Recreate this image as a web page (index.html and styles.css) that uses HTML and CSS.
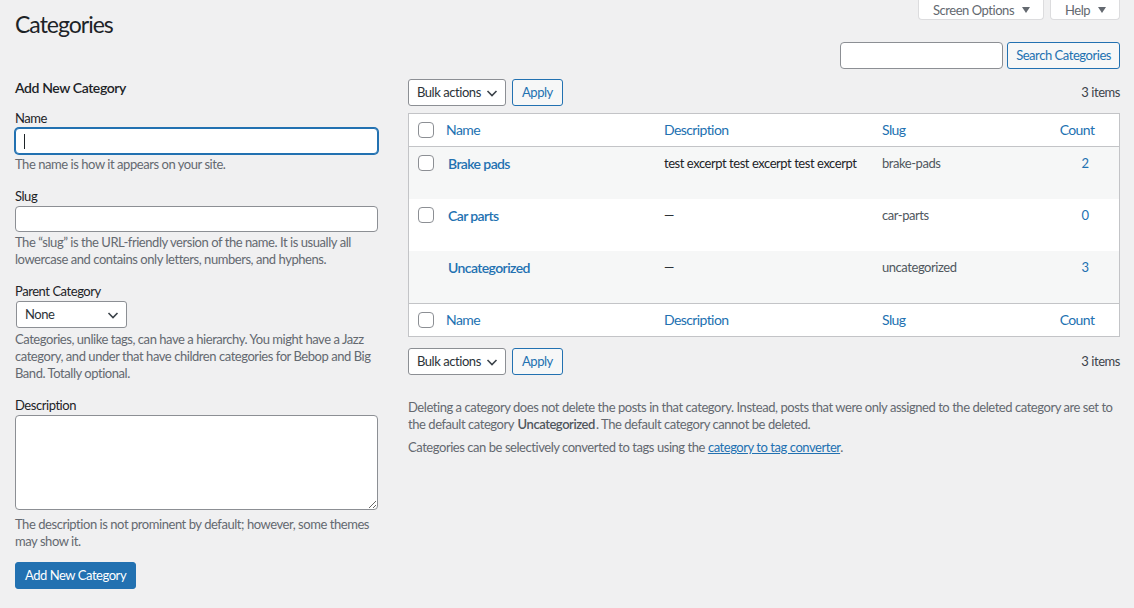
FILE: index.html
```html
<!DOCTYPE html>
<html lang="en">
<head>
    <meta charset="utf-8">
    <title>Categories</title>
    <link rel="stylesheet" href="styles.css">
</head>
<body>
    <div class="wrap">
        <div class="page-head">
            <h1>Categories</h1>
            <div class="screen-meta-links">
                <button class="meta-tab">Screen Options <svg class="tri" width="8" height="6" viewBox="0 0 8 6"><path d="M0 0h8L4 6z"/></svg></button>
                <button class="meta-tab">Help <svg class="tri" width="8" height="6" viewBox="0 0 8 6"><path d="M0 0h8L4 6z"/></svg></button>
            </div>
        </div>

        <form class="search-box">
            <input type="search" class="search-input">
            <button type="button" class="button">Search Categories</button>
        </form>

        <div class="col-container">
            <div class="col-left">
                <h2>Add New Category</h2>
                <form class="form-wrap">
                    <div class="form-field">
                        <label for="tag-name">Name</label>
                        <div class="input-wrap">
                            <input type="text" id="tag-name" class="text-input focused">
                            <span class="caret"></span>
                        </div>
                        <p class="help">The name is how it appears on your site.</p>
                    </div>
                    <div class="form-field">
                        <label for="tag-slug">Slug</label>
                        <input type="text" id="tag-slug" class="text-input">
                        <p class="help">The “slug” is the URL-friendly version of the name. It is usually all lowercase and contains only letters, numbers, and hyphens.</p>
                    </div>
                    <div class="form-field">
                        <label for="parent">Parent Category</label>
                        <select id="parent" class="select parent-select">
                            <option>None</option>
                        </select>
                        <p class="help">Categories, unlike tags, can have a hierarchy. You might have a Jazz category, and under that have children categories for Bebop and Big Band. Totally optional.</p>
                    </div>
                    <div class="form-field">
                        <label for="tag-description">Description</label>
                        <textarea id="tag-description" class="textarea"></textarea>
                        <p class="help">The description is not prominent by default; however, some themes may show it.</p>
                    </div>
                    <button type="button" class="button-primary">Add New Category</button>
                </form>
            </div>

            <div class="col-right">
                <div class="tablenav">
                    <div class="bulk">
                        <select class="select bulk-select"><option>Bulk actions</option></select>
                        <button type="button" class="button">Apply</button>
                    </div>
                    <span class="num-items">3 items</span>
                </div>

                <table class="widefat">
                    <thead>
                        <tr>
                            <th class="check-column"><span class="checkbox"></span></th>
                            <th class="col-name"><a href="#">Name</a></th>
                            <th class="col-desc"><a href="#">Description</a></th>
                            <th class="col-slug"><a href="#">Slug</a></th>
                            <th class="col-count"><a href="#">Count</a></th>
                        </tr>
                    </thead>
                    <tbody>
                        <tr class="alt">
                            <td class="check-column"><span class="checkbox"></span></td>
                            <td class="col-name"><a class="row-title" href="#">Brake pads</a></td>
                            <td class="col-desc desc-text">test excerpt test excerpt test excerpt</td>
                            <td class="col-slug">brake-pads</td>
                            <td class="col-count"><a href="#">2</a></td>
                        </tr>
                        <tr>
                            <td class="check-column"><span class="checkbox"></span></td>
                            <td class="col-name"><a class="row-title" href="#">Car parts</a></td>
                            <td class="col-desc">—</td>
                            <td class="col-slug">car-parts</td>
                            <td class="col-count"><a href="#">0</a></td>
                        </tr>
                        <tr class="alt">
                            <td class="check-column"></td>
                            <td class="col-name"><a class="row-title" href="#">Uncategorized</a></td>
                            <td class="col-desc">—</td>
                            <td class="col-slug">uncategorized</td>
                            <td class="col-count"><a href="#">3</a></td>
                        </tr>
                    </tbody>
                    <tfoot>
                        <tr>
                            <th class="check-column"><span class="checkbox"></span></th>
                            <th class="col-name"><a href="#">Name</a></th>
                            <th class="col-desc"><a href="#">Description</a></th>
                            <th class="col-slug"><a href="#">Slug</a></th>
                            <th class="col-count"><a href="#">Count</a></th>
                        </tr>
                    </tfoot>
                </table>

                <div class="tablenav bottom">
                    <div class="bulk">
                        <select class="select bulk-select"><option>Bulk actions</option></select>
                        <button type="button" class="button">Apply</button>
                    </div>
                    <span class="num-items">3 items</span>
                </div>

                <div class="notes">
                    <p>Deleting a category does not delete the posts in that category. Instead, posts that were only assigned to the deleted category are set to the default category <strong>Uncategorized</strong>. The default category cannot be deleted.</p>
                    <p>Categories can be selectively converted to tags using the <a href="#">category to tag converter</a>.</p>
                </div>
            </div>
        </div>
    </div>
</body>
</html>
```

FILE: styles.css
```css
body {
    margin: 0;
    background-color: #f0f0f1;
    color: #3c434a;
    font-family: Lato, "Segoe UI", sans-serif;
    font-size: 13px;
    line-height: 17px;
    letter-spacing: -0.45px;
}

a {
    color: #2271b1;
    text-decoration: none;
}

input,
select,
textarea,
button {
    letter-spacing: inherit;
}

.wrap {
    padding: 0 14px 0 15px;
}

.page-head {
    display: flex;
    justify-content: space-between;
    align-items: flex-start;
}

h1 {
    margin: 9px 0 0;
    font-size: 23px;
    font-weight: 400;
    line-height: 30px;
    letter-spacing: -1px;
    color: #1d2327;
}

.screen-meta-links {
    display: flex;
    gap: 6px;
}

.meta-tab {
    height: 20px;
    padding: 0 13px 0 14px;
    border: 1px solid #dcdcde;
    border-top: 0;
    border-radius: 0 0 4px 4px;
    background-color: #fff;
    color: #646970;
    font: inherit;
    line-height: 18px;
}

.meta-tab .tri {
    margin-left: 5px;
    fill: #646970;
    vertical-align: 2px;
}

.search-box {
    display: flex;
    justify-content: flex-end;
    gap: 4px;
    margin-top: 3px;
}

.search-input {
    width: 163px;
    height: 27px;
    box-sizing: border-box;
    border: 1px solid #8c8f94;
    border-radius: 4px;
    background-color: #fff;
}

.button {
    height: 27px;
    padding: 0 9px;
    border: 1px solid #2271b1;
    border-radius: 3px;
    background-color: #f6f7f7;
    color: #2271b1;
    font: inherit;
}

.search-box .button {
    padding: 0 8px;
}

.col-container {
    display: flex;
}

.col-left {
    width: 363px;
    margin-right: 30px;
    flex-shrink: 0;
}

.col-right {
    flex: 1;
}

h2 {
    margin: 9px 0 12px;
    font-size: 14px;
    font-weight: 600;
    line-height: 20px;
    letter-spacing: -0.4px;
    color: #1d2327;
}

.form-field {
    margin-bottom: 15px;
}

.form-field label {
    display: block;
    margin-bottom: 1px;
    color: #1d2327;
}

.input-wrap {
    position: relative;
}

.text-input {
    display: block;
    width: 100%;
    height: 26px;
    box-sizing: border-box;
    border: 1px solid #8c8f94;
    border-radius: 4px;
    background-color: #fff;
}

.text-input.focused {
    border-color: #2271b1;
    box-shadow: 0 0 0 1px #2271b1;
}

.caret {
    position: absolute;
    left: 9px;
    top: 6px;
    width: 1px;
    height: 15px;
    background-color: #1d2327;
}

.help {
    margin: 2px 0 0;
    color: #646970;
}

.select {
    appearance: none;
    height: 27px;
    box-sizing: border-box;
    padding: 0 22px 0 8px;
    border: 1px solid #8c8f94;
    border-radius: 3px;
    background: #fff url('data:image/svg+xml;utf8,<svg xmlns="http://www.w3.org/2000/svg" width="12" height="8" viewBox="0 0 12 8"><path d="M1.5 2l4.5 4.5 4.5-4.5" fill="none" stroke="%233c434a" stroke-width="1.6"/></svg>') no-repeat right 7px center;
    color: #2c3338;
    font: inherit;
}

.parent-select {
    display: block;
    width: 111px;
    margin: 0 0 3px 1px;
}

.textarea {
    display: block;
    width: 100%;
    height: 95px;
    box-sizing: border-box;
    margin-bottom: 6px;
    border: 1px solid #8c8f94;
    border-radius: 4px;
    background-color: #fff;
}

.button-primary {
    height: 27px;
    margin-top: -3px;
    padding: 0 9px;
    border: 1px solid #2271b1;
    border-radius: 3px;
    background-color: #2271b1;
    color: #fff;
    font: inherit;
}

.tablenav {
    display: flex;
    justify-content: space-between;
    align-items: center;
    margin: 10px 0 7px;
}

.tablenav.bottom {
    margin: 11px 0 0;
}

.bulk {
    display: flex;
    gap: 6px;
}

.bulk-select {
    width: 98px;
}

.num-items {
    color: #3c434a;
}

.widefat {
    width: 100%;
    table-layout: fixed;
    border: 1px solid #c3c4c7;
    border-spacing: 0;
    background-color: #fff;
}

.widefat th {
    padding: 7px 10px 8px;
    font-size: 14px;
    font-weight: 400;
    line-height: 17px;
    letter-spacing: -0.6px;
    text-align: left;
}

.widefat thead th {
    border-bottom: 1px solid #c3c4c7;
}

.widefat tfoot th {
    border-top: 1px solid #c3c4c7;
}

.widefat td {
    height: 36px;
    padding: 8px 10px;
    vertical-align: top;
    color: #50575e;
}

.widefat tr.alt td {
    background-color: #f6f7f7;
}

.widefat .check-column {
    width: 18px;
    padding: 0 0 0 9px;
    vertical-align: middle;
}

.widefat td.check-column {
    padding-top: 8px;
    vertical-align: top;
}

.widefat .col-name {
    width: 198px;
}

.widefat .col-desc {
    width: 198px;
}

.widefat .col-slug {
    width: 153px;
}

.widefat .col-count {
    width: 44px;
    text-align: center;
}

.widefat td.col-count {
    padding: 8px 7px 8px 13px;
}

.widefat th.col-count {
    padding-right: 20px;
}

.checkbox {
    display: block;
    width: 16px;
    height: 16px;
    box-sizing: border-box;
    border: 1px solid #8c8f94;
    border-radius: 4px;
    background-color: #fff;
}

.row-title {
    margin-left: 2px;
    font-size: 14px;
    font-weight: 600;
    letter-spacing: -0.6px;
}

.widefat td.col-desc {
    color: #2c3338;
}

.widefat td.desc-text {
    color: #1d2327;
}

.notes {
    margin-top: 24px;
}

.notes p {
    margin: 0 0 6px;
    color: #646970;
}

.notes strong {
    padding: 0 1px;
    font-weight: 600;
    color: #50575e;
}

.notes a {
    text-decoration: underline;
}
```
